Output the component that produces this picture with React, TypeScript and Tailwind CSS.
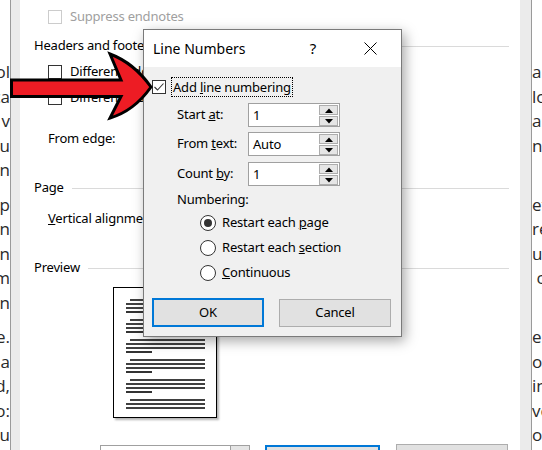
import React from "react";

const ui = "font-['Noto_Sans',sans-serif] text-[13px] tracking-[-0.2px] text-black";

// document text peeking out on both sides of the Page Setup window
const leftParas = [
  ["wol", "ca", "ic v", "exu", "an"],
  ["ti p", "ven", "in", "em", "tun"],
  ["ne.", "qua", "ad,", "co:", "mu"],
];
const rightParas = [
  ["a", "lo", "a", "ni", ""],
  ["et", "re", "u", " c", ""],
  ["e", "ou", "in", "ve", "o"],
];

function DocStrip({ paras, align }: { paras: string[][]; align: "left" | "right" }) {
  return (
    <div className="flex flex-col gap-[10px] overflow-hidden pt-[60px] font-['Open_Sans',sans-serif] text-[17px] leading-[24.5px] text-[#2a2a2a]">
      {paras.map((lines, i) => (
        <div key={i} className="flex flex-col">
          {lines.map((l, j) => (
            <div
              key={j}
              className={`flex h-[24.5px] whitespace-pre ${align === "right" ? "justify-end" : "justify-start"}`}
            >
              {l}
            </div>
          ))}
        </div>
      ))}
    </div>
  );
}

function Box({ disabled = false }: { disabled?: boolean }) {
  return (
    <span
      className={`h-[14px] w-[14px] shrink-0 border bg-white ${disabled ? "border-[#cccccc]" : "border-[#333333]"}`}
    />
  );
}

function GroupHeader({ label }: { label: string }) {
  return (
    <div className="flex h-[22px] items-center pl-[14px]">
      <span>{label}</span>
      <span className="ml-[8px] h-px flex-1 bg-[#dadada]" />
    </div>
  );
}

// little page thumbnail in the Preview group
function PreviewPage() {
  const groups = [12, 32, 52, 72, 92, 112];
  return (
    <div className="ml-[93px] mt-[8px] h-[131px] w-[104px] border border-black bg-white shadow-[2px_2px_2px_rgba(0,0,0,0.3)]">
      <svg width="102" height="129" viewBox="0 0 102 129">
        {groups.map((y, i) => (
          <g key={i} stroke="#000" strokeWidth="1.6">
            <line x1="16" y1={y} x2="91" y2={y} />
            <line x1="12" y1={y + 4} x2="91" y2={y + 4} />
            <line x1="12" y1={y + 8} x2="91" y2={y + 8} />
            {i < 5 && <line x1="12" y1={y + 12} x2="38" y2={y + 12} />}
          </g>
        ))}
      </svg>
    </div>
  );
}

function PageSetup() {
  return (
    <div className={`flex flex-1 flex-col overflow-hidden bg-white pr-[11px] *:shrink-0 ${ui}`}>
      <div className="mt-[5px] flex h-[24px] items-center gap-[8px] pl-[28px]">
        <Box disabled />
        <span className="text-[#a0a0a0]">Suppress endnotes</span>
      </div>
      <div className="mt-[6px]">
        <GroupHeader label="Headers and footers" />
      </div>
      <div className="mt-[4px] flex h-[22px] items-center gap-[8px] pl-[28px]">
        <Box />
        <span>Different odd and even</span>
      </div>
      <div className="mt-[4px] flex h-[22px] items-center gap-[8px] pl-[28px]">
        <Box />
        <span>Different first page</span>
      </div>
      <div className="mt-[19px] flex h-[22px] items-center pl-[28px]">From edge:</div>
      <div className="mt-[27px]">
        <GroupHeader label="Page" />
      </div>
      <div className="mt-[9px] flex h-[22px] items-center pl-[28px]">
        <span>
          <span className="underline">V</span>ertical alignment:
        </span>
      </div>
      <div className="mt-[27px]">
        <GroupHeader label="Preview" />
      </div>
      <PreviewPage />
      <div className="mt-[27px] flex h-[30px] items-start pl-[80px]">
        <div className="flex h-[26px] w-[150px] border border-[#a0a0a0]">
          <span className="flex-1" />
          <span className="w-[19px] border-l border-[#a0a0a0] bg-[#e5e5e5]" />
        </div>
        <div className="ml-[15px] h-[28px] w-[115px] border-2 border-[#0078d7] bg-[#e1e1e1]" />
        <div className="ml-[16px] -mt-px h-[28px] w-[112px] border border-[#adadad] bg-[#e1e1e1]" />
      </div>
    </div>
  );
}

function Arrow({ up }: { up: boolean }) {
  return (
    <span className="flex h-[10px] w-full items-center justify-center border border-[#adadad] bg-[#e5e5e5]">
      <svg width="8" height="5" viewBox="0 0 8 5">
        {up ? <path d="M0 5 L4 0.5 L8 5 Z" fill="#000" /> : <path d="M0 0 L4 4.5 L8 0 Z" fill="#000" />}
      </svg>
    </span>
  );
}

function SpinBox({ value }: { value: string }) {
  return (
    <div className="flex h-[24px] w-[92px] border border-[#a0a0a0] bg-white">
      <span className="flex-1 pl-[4px] leading-[22px]">{value}</span>
      <div className="mr-px mt-px flex w-[19px] flex-col gap-px">
        <Arrow up />
        <Arrow up={false} />
      </div>
    </div>
  );
}

function Field({ label, accel, rest, value }: { label: string; accel: string; rest: string; value: string }) {
  return (
    <div className="flex h-[24px] items-center">
      <span className="w-[96px] shrink-0 whitespace-nowrap pl-[25px]">
        {label}
        <span className="underline">{accel}</span>
        {rest}
      </span>
      <SpinBox value={value} />
    </div>
  );
}

function Radio({ checked, children }: { checked?: boolean; children: React.ReactNode }) {
  return (
    <div className="flex h-[25px] items-center gap-[6px] pl-[48px]">
      <span className="flex h-[16px] w-[16px] items-center justify-center rounded-full border border-[#333] bg-white">
        {checked && <span className="h-[8px] w-[8px] rounded-full bg-[#333]" />}
      </span>
      <span>{children}</span>
    </div>
  );
}

function LineNumbersDialog() {
  return (
    <div
      className={`absolute left-[143px] top-[29px] flex h-[308px] w-[259px] flex-col border border-[#7a7a7a] bg-[#f0f0f0] shadow-[3px_4px_12px_rgba(0,0,0,0.35)] ${ui}`}
    >
      <div className="flex h-[37px] shrink-0 items-center bg-white pl-[9px]">
        <span className="text-[14px] tracking-normal">Line Numbers</span>
        <span className="ml-auto w-[30px] text-center text-[15px]">?</span>
        <span className="ml-[27px] mr-[16px] flex w-[30px] items-center justify-center">
          <svg width="13" height="13" viewBox="0 0 13 13" stroke="#000" strokeWidth="1">
            <path d="M0.5 0.5 L12.5 12.5 M12.5 0.5 L0.5 12.5" />
          </svg>
        </span>
      </div>

      <div className="flex flex-col pl-[8px] *:shrink-0">
        <div className="mt-[9px] flex h-[21px] items-center gap-[5px]">
          <span className="flex h-[14px] w-[14px] items-center justify-center border border-[#333] bg-white">
            <svg width="12" height="12" viewBox="0 0 12 12">
              <path d="M1.5 6 L4.5 9 L10.5 2.5" fill="none" stroke="#333" strokeWidth="1.1" />
            </svg>
          </span>
          <span className="border border-dotted border-black px-[1px] leading-[18px]">
            Add <span className="underline">l</span>ine numbering
          </span>
        </div>

        <div className="mt-[6px]">
          <Field label="Start " accel="a" rest="t:" value="1" />
        </div>
        <div className="mt-[5px]">
          <Field label="From " accel="t" rest="ext:" value="Auto" />
        </div>
        <div className="mt-[6px]">
          <Field label="Count " accel="b" rest="y:" value="1" />
        </div>

        <div className="mt-[4px] flex h-[20px] items-center pl-[25px]">Numbering:</div>
        <Radio checked>
          Restart each <span className="underline">p</span>age
        </Radio>
        <Radio>
          Restart each <span className="underline">s</span>ection
        </Radio>
        <Radio>
          <span className="underline">C</span>ontinuous
        </Radio>

        <div className="mt-[13px] flex items-center">
          <button className="h-[29px] w-[112px] border-2 border-[#0078d7] bg-[#e1e1e1]">OK</button>
          <button className="ml-[15px] h-[28px] w-[112px] border border-[#adadad] bg-[#e1e1e1]">Cancel</button>
        </div>
      </div>
    </div>
  );
}

function RedArrow() {
  return (
    <svg className="pointer-events-none absolute left-0 top-0" width="542" height="450" viewBox="0 0 542 450">
      <path
        d="M11.5 80 H121 L110 54 Q134 63 151 87 Q134 111 110 118 L121 96.5 H11.5 Z"
        fill="#ed1c24"
        stroke="#000"
        strokeWidth="3"
        strokeLinejoin="miter"
      />
    </svg>
  );
}

export default function App() {
  return (
    <div className="relative flex h-[450px] w-[542px] overflow-hidden bg-white">
      <div className="w-[10px] shrink-0">
        <DocStrip paras={leftParas} align="right" />
      </div>
      <div className="w-[10px] shrink-0 border-l border-[#9a9a9a] bg-[#ebebeb]" />
      <PageSetup />
      <div className="w-[12px] shrink-0 border-r border-[#9a9a9a] bg-[#ebebeb]" />
      <div className="w-[10px] shrink-0">
        <DocStrip paras={rightParas} align="left" />
      </div>
      <LineNumbersDialog />
      <RedArrow />
    </div>
  );
}
